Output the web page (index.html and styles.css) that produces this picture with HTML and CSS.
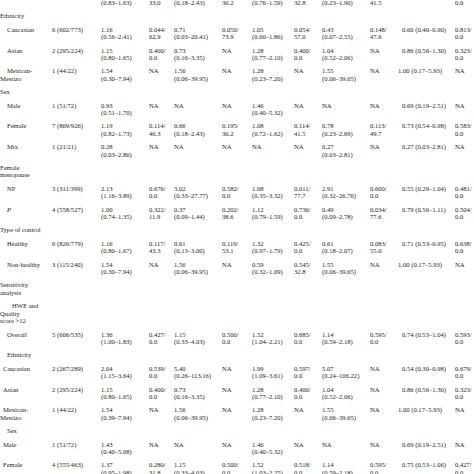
FILE: index.html
```html
<!DOCTYPE html>
<html>
<head>
<meta charset="utf-8">
<link rel="stylesheet" href="styles.css">
</head>
<body>
<table class="data">
<colgroup>
<col class="c-label"><col class="c-n"><col class="c-or"><col class="c-p1"><col class="c-or"><col class="c-p2"><col class="c-or2"><col class="c-p3"><col class="c-or"><col class="c-p4"><col class="c-wide"><col class="c-last">
</colgroup>
<tbody>
<tr><td class="lab">Overall</td><td>9 (941/1019)</td><td>1.11<br>(0.83–1.63)</td><td>0.193/<br>33.0</td><td>0.87<br>(0.18–2.43)</td><td>0.195/<br>36.2</td><td>1.10<br>(0.76–1.59)</td><td>0.174/<br>32.8</td><td>0.66<br>(0.23–1.90)</td><td>0.113/<br>41.5</td><td>0.71 (0.56–0.90)</td><td>0.713/<br>0.0</td></tr>
<tr><td class="grp" colspan="12">Ethnicity</td></tr>
<tr><td class="lab sub">Caucasian</td><td>6 (602/773)</td><td>1.16<br>(0.56–2.41)</td><td>0.044/<br>62.9</td><td>0.71<br>(0.03–20.41)</td><td>0.050/<br>73.9</td><td>1.05<br>(0.60–1.86)</td><td>0.054/<br>57.0</td><td>0.43<br>(0.07–2.55)</td><td>0.148/<br>47.6</td><td>0.60 (0.40–0.90)</td><td>0.813/<br>0.0</td></tr>
<tr><td class="lab sub">Asian</td><td>2 (295/224)</td><td>1.15<br>(0.80–1.65)</td><td>0.400/<br>0.0</td><td>0.73<br>(0.16–3.35)</td><td>NA</td><td>1.28<br>(0.77–2.10)</td><td>0.400/<br>0.0</td><td>1.04<br>(0.52–2.06)</td><td>NA</td><td>0.86 (0.56–1.30)</td><td>0.323/<br>0.0</td></tr>
<tr><td class="lab sub">Mexican-<br>Mestizo</td><td>1 (44/22)</td><td>1.54<br>(0.30–7.94)</td><td>NA</td><td>1.56<br>(0.06–39.95)</td><td>NA</td><td>1.28<br>(0.23–7.20)</td><td>NA</td><td>1.55<br>(0.06–39.65)</td><td>NA</td><td><span class="shift">1.00 (0.17–5.93)</span></td><td>NA</td></tr>
<tr><td class="grp" colspan="12">Sex</td></tr>
<tr><td class="lab sub">Male</td><td>1 (51/72)</td><td>0.93<br>(0.51–1.70)</td><td>NA</td><td>NA</td><td>NA</td><td>1.46<br>(0.40–5.32)</td><td>NA</td><td>NA</td><td>NA</td><td>0.69 (0.19–2.51)</td><td>NA</td></tr>
<tr><td class="lab sub">Female</td><td>7 (869/926)</td><td>1.19<br>(0.82–1.73)</td><td>0.114/<br>46.3</td><td>0.66<br>(0.18–2.43)</td><td>0.195/<br>36.2</td><td>1.08<br>(0.72–1.62)</td><td>0.114/<br>41.5</td><td>0.78<br>(0.23–2.69)</td><td>0.113/<br>49.7</td><td>0.73 (0.54–0.98)</td><td>0.583/<br>0.0</td></tr>
<tr><td class="lab sub">Mix</td><td>1 (21/21)</td><td>0.28<br>(0.03–2.86)</td><td>NA</td><td>NA</td><td>NA</td><td>NA</td><td>NA</td><td>0.27<br>(0.03–2.81)</td><td>NA</td><td>0.27 (0.03–2.81)</td><td>NA</td></tr>
<tr><td class="grp" colspan="12">Female<br>menopause</td></tr>
<tr><td class="lab sub">NP</td><td>3 (311/399)</td><td>2.13<br>(1.16–3.89)</td><td>0.676/<br>0.0</td><td>3.02<br>(0.33–27.77)</td><td>0.582/<br>0.0</td><td>1.08<br>(0.35–3.32)</td><td>0.011/<br>77.7</td><td>2.91<br>(0.32–26.76)</td><td>0.600/<br>0.0</td><td>0.55 (0.29–1.04)</td><td>0.481/<br>0.0</td></tr>
<tr><td class="lab sub"><i>P</i></td><td>4 (558/527)</td><td>1.00<br>(0.74–1.35)</td><td>0.322/<br>11.9</td><td>0.37<br>(0.09–1.44)</td><td>0.202/<br>38.6</td><td>1.12<br>(0.79–1.59)</td><td>0.736/<br>0.0</td><td>0.49<br>(0.09–2.78)</td><td>0.034/<br>77.6</td><td>0.79 (0.56–1.11)</td><td>0.504/<br>0.0</td></tr>
<tr><td class="grp" colspan="12">Type of control</td></tr>
<tr><td class="lab sub">Healthy</td><td>6 (826/779)</td><td>1.16<br>(0.80–1.67)</td><td>0.117/<br>43.3</td><td>0.61<br>(0.13–3.00)</td><td>0.119/<br>53.1</td><td>1.32<br>(0.97–1.79)</td><td>0.425/<br>0.0</td><td>0.61<br>(0.18–2.07)</td><td>0.083/<br>55.0</td><td>0.71 (0.53–0.95)</td><td>0.638/<br>0.0</td></tr>
<tr><td class="lab sub">Non-healthy</td><td>3 (115/240)</td><td>1.54<br>(0.30–7.94)</td><td>NA</td><td>1.56<br>(0.06–39.95)</td><td>NA</td><td>0.59<br>(0.32–1.09)</td><td>0.545/<br>32.8</td><td>1.55<br>(0.06–39.65)</td><td>NA</td><td><span class="shift">1.00 (0.17–5.93)</span></td><td>NA</td></tr>
<tr><td class="grp" colspan="12">Sensitivity<br>analysis</td></tr>
<tr><td class="grp hwe" colspan="12">HWE and<br>Quality<br>score &gt;12</td></tr>
<tr><td class="lab sub">Overall</td><td>5 (606/535)</td><td>1.36<br>(1.00–1.83)</td><td>0.427/<br>0.0</td><td>1.15<br>(0.33–4.03)</td><td>0.500/<br>0.0</td><td>1.52<br>(1.04–2.21)</td><td>0.685/<br>0.0</td><td>1.14<br>(0.59–2.18)</td><td>0.595/<br>0.0</td><td>0.74 (0.53–1.04)</td><td>0.593/<br>0.0</td></tr>
<tr><td class="grp sub" colspan="12">Ethnicity</td></tr>
<tr><td class="lab sub2">Caucasian</td><td>2 (267/289)</td><td>2.04<br>(1.15–3.64)</td><td>0.539/<br>0.0</td><td>5.40<br>(0.26–113.16)</td><td>NA</td><td>1.99<br>(1.09–3.61)</td><td>0.597/<br>0.0</td><td>5.07<br>(0.24–106.22)</td><td>NA</td><td>0.54 (0.30–0.98)</td><td>0.679/<br>0.0</td></tr>
<tr><td class="lab sub2">Asian</td><td>2 (295/224)</td><td>1.15<br>(0.80–1.65)</td><td>0.400/<br>0.0</td><td>0.73<br>(0.16–3.35)</td><td>NA</td><td>1.28<br>(0.77–2.10)</td><td>0.400/<br>0.0</td><td>1.04<br>(0.52–2.06)</td><td>NA</td><td>0.86 (0.56–1.30)</td><td>0.323/<br>0.0</td></tr>
<tr><td class="lab sub2">Mexican-<br>Mestizo</td><td>1 (44/22)</td><td>1.54<br>(0.39–7.94)</td><td>NA</td><td>1.56<br>(0.06–39.95)</td><td>NA</td><td>1.28<br>(0.23–7.20)</td><td>NA</td><td>1.55<br>(0.06–39.65)</td><td>NA</td><td><span class="shift">1.00 (0.17–5.93)</span></td><td>NA</td></tr>
<tr><td class="grp sub" colspan="12">Sex</td></tr>
<tr><td class="lab sub2">Male</td><td>1 (51/72)</td><td>1.43<br>(0.40–5.08)</td><td>NA</td><td>NA</td><td>NA</td><td>1.46<br>(0.40–5.32)</td><td>NA</td><td>NA</td><td>NA</td><td>0.69 (0.19–2.51)</td><td>NA</td></tr>
<tr><td class="lab sub2">Female</td><td>4 (555/463)</td><td>1.37<br>(0.95–1.98)</td><td>0.280/<br>31.8</td><td>1.15<br>(0.33–4.03)</td><td>0.500/<br>0.0</td><td>1.52<br>(1.03–2.25)</td><td>0.518/<br>0.0</td><td>1.14<br>(0.59–2.18)</td><td>0.595/<br>0.0</td><td>0.75 (0.53–1.06)</td><td>0.427/<br>0.0</td></tr>
</tbody>
</table>
</body>
</html>
```
FILE: styles.css
```css
html, body {
  margin: 0;
  padding: 0;
  overflow: hidden;
  background: #ffffff;
}
.data {
  table-layout: fixed;
  width: 474px;
  border-collapse: collapse;
  border-spacing: 0;
  margin-top: -11.5px;
  font-family: "Liberation Serif", "Times New Roman", serif;
  font-size: 6.6px;
  line-height: 7.4px;
  color: #262626;
}
.data td {
  padding: 3px 0;
  vertical-align: top;
  white-space: nowrap;
  overflow: visible;
}
.c-label { width: 52px; }
.c-n { width: 49px; }
.c-or { width: 48px; }
.c-p1 { width: 25px; }
.c-p2 { width: 30px; }
.c-or2 { width: 42px; }
.c-p3 { width: 28px; }
.c-p4 { width: 32px; }
.c-wide { width: 53px; }
.c-last { width: 19px; }
.sub { text-indent: 7px; }
.sub2 { text-indent: 3px; }
.hwe { text-indent: 12px; }
.shift { margin-left: -4px; }
```
